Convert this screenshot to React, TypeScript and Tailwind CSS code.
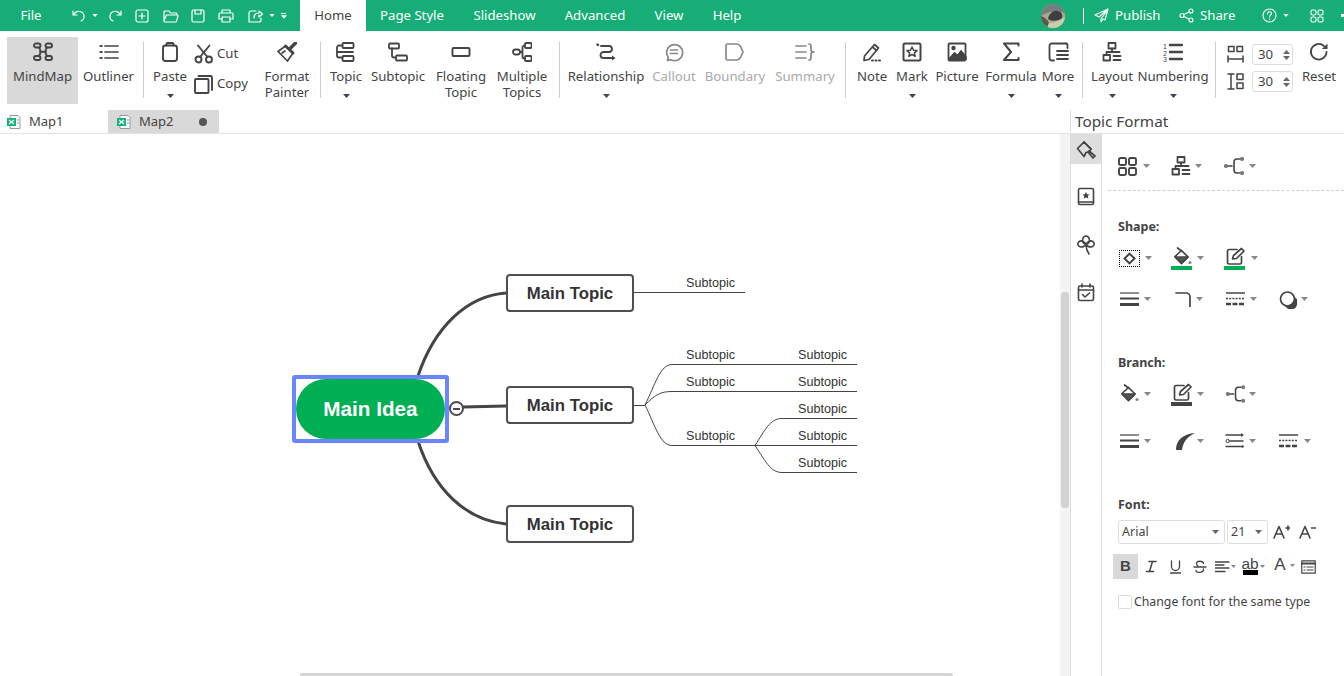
import React from "react";

type P = { children?: React.ReactNode; w?: number; h?: number; c?: string; sw?: number; vb?: string };
const I = ({ children, w = 20, h = 20, c = "#444", sw = 1.7, vb }: P) => (
  <svg width={w} height={h} viewBox={vb ?? `0 0 ${w} ${h}`} fill="none" stroke={c} strokeWidth={sw} strokeLinecap="round" strokeLinejoin="round" className="block shrink-0">
    {children}
  </svg>
);

const Caret = ({ c = "#445", w = 7, h = 4 }: { c?: string; w?: number; h?: number }) => (
  <svg width={w} height={h} viewBox="0 0 7 4" className="block shrink-0"><path d="M0 0h7L3.5 4z" fill={c} /></svg>
);

const MindMapI = () => (
  <I sw={1.9}><rect x="1" y="1.5" width="6.5" height="4" rx="2" /><rect x="12.5" y="1.5" width="6.5" height="4" rx="2" /><rect x="1" y="14" width="6.5" height="4" rx="2" /><rect x="12.5" y="14" width="6.5" height="4" rx="2" /><path d="M6 5.5C8 8 8 11 6 14M14 5.5C12 8 12 11 14 14M7 9.7h6" /></I>
);
const OutlinerI = () => (
  <I><path d="M6 4h13M6 10h13M6 16h13" /><path d="M1.5 4h1.2M1.5 10h1.2M1.5 16h1.2" strokeWidth="2.2" /></I>
);
const PasteI = () => (
  <I sw={1.9}><rect x="3" y="3.5" width="14" height="15.5" rx="2.5" /><path d="M6.5 3.5V2a1 1 0 0 1 1-1h5a1 1 0 0 1 1 1v1.5" /></I>
);
const CutI = () => (
  <I sw={1.9}><circle cx="4.5" cy="15.5" r="3" /><circle cx="15" cy="15.5" r="3" /><path d="M6 13L15.5 1.5M13.5 13L4 1.5" /></I>
);
const CopyI = () => (
  <I sw={1.9}><rect x="1" y="5" width="13.5" height="14" rx="1" /><path d="M4.5 2h12a1.5 1.5 0 0 1 1.5 1.5V16" /></I>
);
const BrushI = () => (
  <I><path d="M1 9.5L8.5 4l7.5 7-5.5 8z" fill="#fff" /><path d="M8.5 4l7.500 7" strokeWidth="3" /><path d="M13 6.500L18.500 1" strokeWidth="3.400" /><path d="M5 11l3-2" /></I>
);
const TopicI = () => (
  <I sw={1.800}><rect x="6.500" y="1" width="11" height="5" rx="1" /><rect x="6.500" y="14" width="11" height="5" rx="1" /><path d="M6.500 3.500H3a2 2 0 0 0-2 2v8a2 2 0 0 0 2 2h3.500M1 10h16" /></I>
);
const SubtopicI = () => (
  <I sw={1.800}><rect x="1" y="1.500" width="10" height="5" rx="1" /><rect x="8" y="13.500" width="11" height="5" rx="1" /><path d="M4 6.500v7a2 2 0 0 0 2 2h2" /></I>
);
const FloatI = () => (
  <I sw={1.900}><rect x="1.500" y="6" width="17" height="8" rx="1" /></I>
);
const MultiI = () => (
  <I sw={1.800}><rect x="1" y="7.500" width="7" height="5" rx="2.500" /><rect x="13" y="1" width="6.500" height="5" rx="1" /><rect x="13" y="14" width="6.500" height="5" rx="1" /><path d="M8 10h2.500V5.500a2 2 0 0 1 2-2h.5M10.500 10v4.500a2 2 0 0 0 2 2h.5" /></I>
);
const RelI = () => (
  <I sw={1.800}><path d="M5 4h8a3 3 0 0 1 0 6H7.500a3 3 0 0 0 0 6H15.500" /><path d="M1.500 2.500L2 3" strokeWidth="2.400" /><path d="M16 13.500l3.500 2.500-3.500 2.500z" fill="#444" stroke="none" /></I>
);
const CalloutI = () => (
  <I c="#888"><path d="M3.500 18.500l.7-3.200A8 8 0 1 1 7 17.700z" /><path d="M6.500 8h7M6.500 11.500h7" /></I>
);
const BoundaryI = () => (
  <I c="#888"><path d="M2.500 2h9c2 0 3 .8 4 2.500l2.500 5.500-2.500 5.500c-1 1.700-2 2.500-4 2.500h-9A1.500 1.500 0 0 1 1 16.500v-13A1.500 1.500 0 0 1 2.500 2z" /></I>
);
const SummaryI = () => (
  <I c="#888"><path d="M1 4h10M1 10h10M1 16h10" /><path d="M14 2c2 0 2 1 2 2.500V8c0 1 1 2 3 2-2 0-3 1-3 2v3.500c0 1.500 0 2.500-2 2.500" /></I>
);
const NoteI = () => (
  <I><path d="M2.500 14L12.500 2.500l4 3.500L7 17.500l-5 1z" /><path d="M10.500 5l4 3.500" /><path d="M10 18.500h1M13.500 18.500h1M17 18.500h1" strokeWidth="2" /></I>
);
const MarkI = () => (
  <I sw={2}><rect x="1.500" y="1.500" width="17" height="17" rx="1.500" /><path d="M10 5l1.500 3.200 3.500.4-2.600 2.300.8 3.400-3.200-1.800-3.200 1.800.8-3.400L5 8.600l3.500-.4z" strokeWidth="1.500" /></I>
);
const PictureI = () => (
  <I sw={1.800}><rect x="1.500" y="1.500" width="17" height="17" rx="1" /><path d="M2 17l5.500-6 3 3 3.500-5 5 6v2H2z" fill="#444" /><circle cx="6.500" cy="6" r="1.300" fill="#444" /></I>
);
const SigmaI = () => (
  <I sw={2} w={18}><path d="M16.500 3.500V1.500H2l7 8.500-7 8h14.500v-2" /></I>
);
const MoreI = () => (
  <I w={21} sw={1.800}><path d="M18 1.500H4a2.500 2.500 0 0 0-2.500 2.500v12A2.500 2.500 0 0 0 4 18.500h2" /><path d="M18 1.500a1.500 1.500 0 0 1 1.500 1.500v3" /><path d="M9 9h11M9 13h11M9 17h11" /></I>
);
const LayoutI = () => (
  <I sw={1.800}><rect x="6.500" y="1" width="7" height="5.500" /><rect x="1.500" y="13" width="6.500" height="5.500" /><path d="M10 6.500V10M4.500 13v-3h13M11.500 14h7M11.500 18h7" /></I>
);
const NumberingI = () => (
  <I sw={2.400}><path d="M7 3h12M7 10h12M7 17h12" /><text x="0" y="7" fontSize="7" fill="#444" stroke="none" fontFamily="Liberation Sans">1</text><text x="0" y="13.500" fontSize="7" fill="#444" stroke="none" fontFamily="Liberation Sans">2</text><text x="0" y="20" fontSize="7" fill="#444" stroke="none" fontFamily="Liberation Sans">3</text></I>
);
const ResetI = () => (
  <I sw={1.800}><path d="M17.500 10a7.800 7.800 0 1 1-2.500-6" /><path d="M18.500 1.500v5.500h-5.500z" fill="#444" stroke="none" /></I>
);

const Item = ({ w, icon, label, label2, caret, muted }: { w: string; icon: React.ReactNode; label: string; label2?: string; caret?: boolean; muted?: boolean }) => (
  <div className={`${w} h-[67px] flex flex-col items-center pt-[5px] shrink-0`}>
    <div className="h-[20px] flex items-center justify-center">{icon}</div>
    <div className={`mt-[6px] text-center leading-[16px] whitespace-nowrap ${muted ? "text-[#aaaaaa]" : "text-[#444444]"}`}>
      <div>{label}</div>
      {label2 && <div>{label2}</div>}
    </div>
    {caret && <div className="mt-[10px]"><Caret /></div>}
  </div>
);

const Div = ({ ml = "ml-[4px]", mr = "mr-[3px]" }: { ml?: string; mr?: string }) => (
  <div className={`w-px h-[56px] mt-[5px] bg-[#cccccc] shrink-0 ${ml} ${mr}`} />
);

const Spin = () => (
  <div className="w-[41px] h-[21px] border border-[#dddddd] rounded-[3px] flex items-center justify-between pl-[5px] pr-[2px] text-[#444444]">
    <span>30</span>
    <div className="flex flex-col gap-[2px]">
      <svg width="7" height="4" viewBox="0 0 7 4"><path d="M3.500 0L7 4H0z" fill="#666" /></svg>
      <Caret c="#666" />
    </div>
  </div>
);

const MapIcon = () => (
  <svg width="14" height="14" viewBox="0 0 14 14" className="block shrink-0">
    <path d="M3 .5h8l2 2v11H3z" fill="#fff" stroke="#999" />
    <rect x="0" y="3" width="9" height="8" fill="#11b27a" />
    <path d="M2 5l5 4M7 5L2 9" stroke="#fff" strokeWidth="1.300" />
    <path d="M10 5h2M10 8h2" stroke="#999" />
  </svg>
);

const TopLabel = ({ w, children }: { w: string; children: string }) => (
  <div className={`${w} text-center shrink-0 text-white`}>{children}</div>
);

const G = "#444";

const Cell = ({ w = "w-[53px]", icon, gap = "ml-[6px]" }: { w?: string; icon: React.ReactNode; gap?: string }) => (
  <div className={`${w} flex items-center shrink-0`}>
    {icon}
    <div className={gap}><Caret c="#888" w={7} h={4} /></div>
  </div>
);

const GridI = () => (
  <I w={19} h={19} sw={1.900}><rect x="1" y="1" width="7" height="7" rx="1.500" /><rect x="11" y="1" width="7" height="7" rx="1.500" /><rect x="1" y="11" width="7" height="7" rx="1.500" /><rect x="11" y="11" width="7" height="7" rx="1.500" /></I>
);
const BranchI = ({ w = 21 }: { w?: number }) => (
  <I w={w} h={18} vb="0 0 21 18" sw={1.600}><path d="M2 9h6M15.500 2H13a3 3 0 0 0-3 3v8a3 3 0 0 0 3 3h2.500" /><circle cx="2" cy="9" r="1.300" fill="#777" stroke="#777" /><circle cx="18" cy="2" r="1.300" fill="#777" stroke="#777" /><circle cx="18" cy="16" r="1.300" fill="#777" stroke="#777" /></I>
);
const BucketI = ({ bar }: { bar?: string }) => (
  <div className="flex flex-col items-center w-[21px]">
    <I w={20} h={20}><path d="M3 9.500L9.500 3.500l6.500 6.500-6.500 6.500z" /><path d="M3 10h13l-6.500 6.500z" fill="#555" /><path d="M5.500 1l4 3" /><circle cx="18" cy="15.500" r="1.600" fill="#888" stroke="none" /></I>
    {bar && <div className={`w-[21px] h-[4px] mt-[-1px] ${bar}`} />}
  </div>
);
const EditI = ({ bar }: { bar: string }) => (
  <div className="flex flex-col items-center w-[21px]">
    <I w={20} h={19}><path d="M16.500 9.500v6a1.500 1.500 0 0 1-1.500 1.500H4a1.500 1.500 0 0 1-1.500-1.500V4A1.500 1.500 0 0 1 4 2.500h8" /><path d="M7.500 12l1-3.500L16.500 1.500 19 4l-7.500 7.500z" /></I>
    <div className={`w-[21px] h-[4px] ${bar}`} />
  </div>
);
const LinesI = () => (
  <svg width="19" height="16" viewBox="0 0 19 16" fill="none" stroke={G} className="block shrink-0"><path d="M0 2h19" strokeWidth="1.200" /><path d="M0 7.500h19" strokeWidth="2" /><path d="M0 13.500h19" strokeWidth="3" /></svg>
);
const DashI = () => (
  <svg width="19" height="16" viewBox="0 0 19 16" fill="none" stroke={G} className="block shrink-0"><path d="M0 2h19" strokeWidth="1.500" /><path d="M0 7.500h19" strokeWidth="1.500" strokeDasharray="2 1.200" /><path d="M0 13h19" strokeWidth="2.500" strokeDasharray="5 1.500" /></svg>
);

export default function App() {
  return (
    <div className="w-[1344px] h-[676px] overflow-hidden flex flex-col bg-white text-[13.200px] font-['Noto_Sans','Open_Sans',sans-serif]">
      {/* Title bar */}
      <div className="h-[31px] bg-[#16ae76] flex items-center text-white shrink-0">
        <div className="w-[62px] text-center shrink-0">File</div>
        <div className="flex items-center w-[238px] shrink-0">
          <div className="ml-[10px]"><I w={14} h={14} c="#fff" sw={1.200}><path d="M1 2v4h4M1.500 6C3 3 6 2 8 2.500a5 5 0 0 1 1 9.500" /></I></div>
          <div className="ml-[6px]"><Caret c="#fff" w={6} h={3} /></div>
          <div className="ml-[10px]"><I w={14} h={14} c="#fff" sw={1.200}><path d="M13 2v4H9M12.500 6C11 3 8 2 6 2.500a5 5 0 0 0-1 9.500" /></I></div>
          <div className="ml-[13px]"><I w={14} h={14} c="#fff" sw={1.200}><rect x="1" y="1" width="12" height="12" rx="2" /><path d="M7 4v6M4 7h6" /></I></div>
          <div className="ml-[14px]"><I w={16} h={14} c="#fff" sw={1.200}><path d="M1 12V3a1 1 0 0 1 1-1h4l1.500 2H13a1 1 0 0 1 1 1v1M1 12a1 1 0 0 0 1 1h10.500a1 1 0 0 0 1-.8L15 7a1 1 0 0 0-1-1H4a1 1 0 0 0-1 .8z" /></I></div>
          <div className="ml-[12px]"><I w={14} h={14} c="#fff" sw={1.200}><rect x="1" y="1" width="12" height="12" rx="1.500" /><path d="M4 1v4h6V1" /></I></div>
          <div className="ml-[13px]"><I w={16} h={14} c="#fff" sw={1.200}><path d="M4 4V1h8v3M4 10H1V5a1 1 0 0 1 1-1h12a1 1 0 0 1 1 1v5h-3" /><rect x="4" y="8" width="8" height="5" /></I></div>
          <div className="ml-[14px]"><I w={15} h={14} c="#fff" sw={1.200}><path d="M8 2H3a2 2 0 0 0-2 2v9h10a2 2 0 0 0 2-2V9M6 9c0-3 2-5 5-5V2l3.500 3L11 8V6" /></I></div>
          <div className="ml-[6px]"><Caret c="#fff" w={6} h={3} /></div>
          <div className="ml-[6px] flex flex-col gap-[1px]"><div className="w-[5px] h-px bg-white" /><Caret c="#fff" w={6} h={4} /></div>
        </div>
        <div className="w-[66px] h-[31px] bg-white text-[#444444] flex items-center justify-center shrink-0">Home</div>
        <TopLabel w="w-[92px]">Page Style</TopLabel>
        <TopLabel w="w-[91px] ml-[1px]">Slideshow</TopLabel>
        <TopLabel w="w-[90px]">Advanced</TopLabel>
        <TopLabel w="w-[58px]">View</TopLabel>
        <TopLabel w="w-[58px]">Help</TopLabel>
        <div className="flex-1 flex items-center justify-end">
          <svg width="24" height="24" viewBox="0 0 24 24" className="block shrink-0">
            <clipPath id="av"><circle cx="12" cy="12" r="12" /></clipPath>
            <g clipPath="url(#av)"><rect width="24" height="24" fill="#a8a98e" /><path d="M0 0h24v9C16 6 7 7 0 12z" fill="#727e80" /><path d="M7 15c1-5 5-9 9-8 4 0 6 3 5 7-3 3-10 4-14 1z" fill="#3c3e41" /><path d="M0 12c3 1 6 3 8 7l-2 5H0z" fill="#565a52" /><path d="M8 19c5 0 10-2 16-6v11H6z" fill="#cdcdae" /></g>
          </svg>
          <div className="w-px h-[16px] bg-white ml-[18px] mr-[10px]" />
          <I w={15} h={15} c="#fff" sw={1.100}><path d="M14 1L1 7l4 2 9-8-7 10v3l2-3 2 1z" /></I>
          <span className="ml-[6px] w-[45px]">Publish</span>
          <div className="ml-[19px]"><I w={15} h={15} c="#fff" sw={1.100}><circle cx="3" cy="7.500" r="2" /><circle cx="12" cy="3" r="2" /><circle cx="12" cy="12" r="2" /><path d="M5 6.500l5-2.500M5 8.500l5 2.500" /></I></div>
          <span className="ml-[6px] w-[36px]">Share</span>
          <div className="ml-[26px]"><I w={15} h={15} c="#fff" sw={1.100}><circle cx="7.500" cy="7.500" r="6.500" /><path d="M5.500 6c0-3 4-3 4-.5 0 1.500-2 1.500-2 3.500M7.500 11v.5" /></I></div>
          <div className="ml-[6px]"><Caret c="#fff" w={6} h={3} /></div>
          <div className="ml-[21px]"><I w={14} h={14} c="#fff" sw={1.100}><rect x="1" y="1" width="5" height="5" rx="1.500" /><rect x="8" y="1" width="5" height="5" rx="1.500" /><rect x="1" y="8" width="5" height="5" rx="1.500" /><rect x="8" y="8" width="5" height="5" rx="1.500" /></I></div>
          <div className="ml-[17px] mr-[-1px] w-[4px] h-[3px] bg-white" />
        </div>
      </div>

      {/* Ribbon */}
      <div className="h-[79px] flex pt-[6px] pl-[7px] shrink-0">
        <div className="w-[71px] h-[67px] bg-[#d9d9d9] shrink-0"><Item w="w-[71px]" icon={<MindMapI />} label="MindMap" /></div>
        <Item w="w-[61px]" icon={<OutlinerI />} label="Outliner" />
        <Div ml="ml-[4px]" mr="mr-[2px]" />
        <Item w="w-[48px]" icon={<PasteI />} label="Paste" caret />
        <div className="w-[68px] h-[67px] shrink-0 flex flex-col pt-[7px] text-[#444444]">
          <div className="flex items-center h-[20px]"><CutI /><span className="ml-[3px]">Cut</span></div>
          <div className="flex items-center h-[20px] mt-[10px]"><CopyI /><span className="ml-[3px]">Copy</span></div>
        </div>
        <Item w="w-[50px]" icon={<BrushI />} label="Format" label2="Painter" />
        <Div ml="ml-[8px]" mr="mr-[6px]" />
        <Item w="w-[38px]" icon={<TopicI />} label="Topic" caret />
        <Item w="w-[66px]" icon={<SubtopicI />} label="Subtopic" />
        <Item w="w-[60px]" icon={<FloatI />} label="Floating" label2="Topic" />
        <Item w="w-[62px]" icon={<MultiI />} label="Multiple" label2="Topics" />
        <Div ml="ml-[6px]" mr="mr-[3px]" />
        <Item w="w-[86px]" icon={<RelI />} label="Relationship" caret />
        <Item w="w-[50px]" icon={<CalloutI />} label="Callout" muted />
        <Item w="w-[72px]" icon={<BoundaryI />} label="Boundary" muted />
        <Item w="w-[68px]" icon={<SummaryI />} label="Summary" muted />
        <Div ml="ml-[6px]" mr="mr-[6px]" />
        <Item w="w-[40px]" icon={<NoteI />} label="Note" />
        <Item w="w-[40px]" icon={<MarkI />} label="Mark" caret />
        <Item w="w-[50px]" icon={<PictureI />} label="Picture" />
        <Item w="w-[58px]" icon={<SigmaI />} label="Formula" caret />
        <Item w="w-[36px]" icon={<MoreI />} label="More" caret />
        <Div ml="ml-[6px]" mr="mr-[3px]" />
        <Item w="w-[52px]" icon={<LayoutI />} label="Layout" caret />
        <Item w="w-[70px]" icon={<NumberingI />} label="Numbering" caret />
        <Div ml="ml-[7px]" mr="mr-[11px]" />
        <div className="w-[68px] shrink-0 flex flex-col pt-[7px] gap-[6px]">
          <div className="flex items-center gap-[8px] h-[21px]">
            <I w={17} h={19} sw={1.500}><rect x="1.500" y="1.500" width="5.500" height="5" /><rect x="10" y="1.500" width="5.500" height="5" /><path d="M1 11v6M16 11v6M1 14h15" /></I>
            <Spin />
          </div>
          <div className="flex items-center gap-[8px] h-[21px]">
            <I w={17} h={19} sw={1.500}><path d="M1 2h6M1 17h6M4 2v15" /><rect x="10" y="2" width="6" height="5.500" /><rect x="10" y="11" width="6" height="5.500" /></I>
            <Spin />
          </div>
        </div>
        <div className="ml-[5px]"><Item w="w-[38px]" icon={<ResetI />} label="Reset" /></div>
      </div>

      {/* Tab row */}
      <div className="h-[24px] flex border-b border-[#e3e3e3] shrink-0 text-[#444444] text-[13px]">
        <div className="w-[108px] flex items-center pl-[7px] shrink-0"><MapIcon /><span className="ml-[8px]">Map1</span></div>
        <div className="w-[111px] bg-[#d9d9d9] flex items-center pl-[9px] shrink-0"><MapIcon /><span className="ml-[8px]">Map2</span><span className="ml-[25px] w-[8px] h-[8px] rounded-full bg-[#555555] shrink-0" /></div>
        <div className="flex-1" />
        <div className="w-[274px] border-l border-[#dddddd] pl-[4px] flex items-center text-[15.300px] shrink-0">Topic Format</div>
      </div>

      {/* Main */}
      <div className="flex-1 flex min-h-0">
        <div className="w-[1060px] relative shrink-0 overflow-hidden">
          <svg width="1060" height="542" viewBox="0 134 1060 542" fill="none" className="absolute left-0 top-0">
            <path d="M418 376C434 328 466 296 506 293" stroke="#444" strokeWidth="3" />
            <path d="M418 441C434 490 466 520 506 524" stroke="#444" strokeWidth="3" />
            <path d="M463 407L506 406" stroke="#444" strokeWidth="3" />
            <g stroke="#444" strokeWidth="1">
              <path d="M634 292.500H745" />
              <path d="M634 405.500H645" />
              <path d="M645 405C655 385 660 364.500 672 364.500H857" />
              <path d="M645 405C655 395 660 391.500 672 391.500H857" />
              <path d="M645 405C655 425 660 445.500 672 445.500H755" />
              <path d="M755 445.500C765 430 770 418.500 782 418.500H857" />
              <path d="M755 445.500H857" />
              <path d="M755 445.500C765 460 770 472.500 782 472.500H857" />
            </g>
          </svg>
          <div className="absolute left-[292px] top-[241px] w-[157px] h-[68px] border-[4px] border-[#6a86ff] rounded-[3px]" />
          <div className="absolute left-[296px] top-[245px] w-[149px] h-[60px] rounded-[30px] bg-[#00ae53] text-white font-bold text-[20.700px] pb-[1px] flex items-center justify-center font-['Liberation_Sans',sans-serif]">Main Idea</div>
          <div className="absolute left-[449px] top-[267px] w-[15px] h-[15px] rounded-full border-2 border-[#4a4a4a] bg-white flex items-center justify-center"><div className="w-[7px] h-[2px] bg-[#4a4a4a]" /></div>
          {[140, 252, 371].map((t, i) => (
            <div key={i} style={{ top: t }} className="absolute left-[506px] w-[128px] h-[38px] rounded-[4px] border-2 border-[#505050] bg-white pt-[1px] flex items-center justify-center font-bold text-[16.800px] text-[#333333] font-['Liberation_Sans',sans-serif]">Main Topic</div>
          ))}
          {[[686, 149], [686, 221], [686, 248], [686, 302], [798, 221], [798, 248], [798, 275], [798, 302], [798, 329]].map(([x, y], i) => (
            <div key={i} style={{ left: x, top: y - 8 }} className="absolute leading-[16px] text-[12.600px] text-[#333333] font-['Liberation_Sans',sans-serif]">Subtopic</div>
          ))}
          <div className="absolute left-[300px] w-[653px] bottom-0 h-[3px] rounded-t-[2px] bg-[#d5d5d5]" />
        </div>

        {/* scrollbar */}
        <div className="w-[10px] bg-[#f3f3f3] shrink-0 pt-[158px] pl-px">
          <div className="w-[8px] h-[216px] bg-[#d2d2d2] rounded-b-[4px] rounded-t-[4px]" />
        </div>

        {/* side icons */}
        <div className="w-[32px] border-l border-r border-[#dddddd] shrink-0 flex flex-col items-center">
          <div className="w-[30px] h-[30px] bg-[#dedede] flex items-center justify-center">
            <I w={20} h={20}><path d="M1.500 9.500L8 3l7 7-2 3-3 .5-2 4z" /><path d="M8 3l7 7" /><path d="M13 12l6 5-2 2-5-6" /></I>
          </div>
          <div className="mt-[23px]"><I w={18} h={20} sw={1.600}><rect x="1.500" y="1.500" width="15" height="16" rx="1.500" /><path d="M1.500 15h15" /><path d="M9 5l1.200 2.200 2.300.3-1.700 1.600.5 2.400L9 10.400l-2.300 1.100.5-2.400-1.700-1.600 2.300-.3z" fill="#444" stroke="none" /></I></div>
          <div className="mt-[28px]"><I w={20} h={20} sw={1.600}><path d="M10 9C6 9 5 2 10 1c5 1 4 8 0 8zM10 9c-3 5-9 3-8-1 1-3 5-3 8 1zM10 9c3 5 9 3 8-1-1-3-5-3-8 1zM10 10c0 4 1 6 3 9" /></I></div>
          <div className="mt-[28px]"><I w={18} h={19} sw={1.600}><rect x="1.500" y="3" width="15" height="14.500" rx="1.500" /><path d="M1.500 7h15M5 1v3M13 1v3M5.500 11.500l2.500 2.500 4.500-4" /></I></div>
        </div>

        {/* Panel */}
        <div className="flex-1 text-[#444444] min-w-0">
          <div className="pl-[16px] pt-[20px] flex h-[44px] items-center">
            <Cell icon={<GridI />} gap="ml-[6px]" />
            <Cell icon={<LayoutI />} gap="ml-[4px]" />
            <Cell icon={<BranchI />} gap="ml-[4px]" />
          </div>
          <div className="mt-[12px] ml-[6px] border-t border-dashed border-[#cfcfcf]" />
          <div className="pl-[16px] mt-[27px] h-[18px] leading-[18px] font-bold text-[12.500px]">Shape:</div>
          <div className="pl-[16px] mt-[7px] h-[30px] flex items-center">
            <Cell icon={<div className="w-[21px] h-[17px] border border-dotted border-black flex items-center justify-center ml-px"><div className="w-[9px] h-[9px] rotate-45 border-2 border-[#444444]" /></div>} gap="ml-[5px]" />
            <Cell icon={<BucketI bar="bg-[#00ae53]" />} gap="ml-[5px]" />
            <Cell icon={<EditI bar="bg-[#00ae53]" />} gap="ml-[6px]" />
          </div>
          <div className="pl-[16px] mt-[11px] h-[30px] flex items-center">
            <Cell icon={<div className="ml-[2px]"><LinesI /></div>} gap="ml-[5px]" />
            <Cell icon={<div className="ml-[4px]"><I w={16} h={16} sw={1.700}><path d="M1 2h10a4 4 0 0 1 4 4v10" /></I></div>} gap="ml-[5px]" />
            <Cell w="w-[55px]" icon={<div className="ml-[2px]"><DashI /></div>} gap="ml-[5px]" />
            <Cell icon={<I w={19} h={19}><circle cx="8.500" cy="9" r="7" fill="#fff" stroke="#444" /><path d="M6 15a7 7 0 0 0 9-8 4 4 0 0 1 3 5 6 6 0 0 1-12 3z" fill="#444" stroke="none" /></I>} gap="ml-[3px]" />
          </div>
          <div className="pl-[16px] mt-[40px] h-[18px] leading-[18px] font-bold text-[12.500px]">Branch:</div>
          <div className="pl-[16px] mt-[7px] h-[30px] flex items-center">
            <Cell icon={<BucketI />} gap="ml-[5px]" />
            <Cell icon={<EditI bar="bg-[#444444]" />} gap="ml-[5px]" />
            <Cell icon={<div className="ml-[2px]"><BranchI w={20} /></div>} gap="ml-[3px]" />
          </div>
          <div className="pl-[16px] mt-[17px] h-[30px] flex items-center">
            <Cell icon={<div className="ml-[2px]"><LinesI /></div>} gap="ml-[5px]" />
            <Cell icon={<div className="ml-[4px]"><I w={20} h={18} sw={1}><path d="M1 18C1 8 8 2 20 1 12 5 8 10 7 18z" fill="#444" stroke="none" /></I></div>} gap="ml-[2px]" />
            <Cell w="w-[55px]" icon={<div className="ml-[1px]"><I w={19} h={16}><path d="M1 2h15M1 13.500h15M5.500 8H18" strokeWidth="1.500" /><circle cx="2.700" cy="8" r="1.700" strokeWidth="1" /><circle cx="17.500" cy="13.500" r="1.300" fill="#444" stroke="none" /><path d="M16 0l3 2-3 2z" fill="#444" stroke="none" /></I></div>} gap="ml-[5px]" />
            <Cell icon={<DashI />} gap="ml-[6px]" />
          </div>
          <div className="pl-[16px] mt-[40px] h-[18px] leading-[18px] font-bold text-[12.500px]">Font:</div>
          <div className="pl-[16px] mt-[6px] h-[24px] flex items-center text-[12.500px]">
            <div className="w-[107px] h-[24px] border border-[#dddddd] rounded-[3px] flex items-center justify-between pl-[3px] pr-[5px]"><span className="pt-[1px]">Arial</span><Caret c="#666" /></div>
            <div className="ml-[2px] w-[41px] h-[24px] border border-[#dddddd] rounded-[3px] flex items-center justify-between pl-[3px] pr-[5px]"><span className="pt-[1px]">21</span><Caret c="#666" /></div>
            <div className="ml-[5px] w-[16px] h-[16px]"><I w={17} h={16} sw={1.600}><path d="M1 14L6 2.500 11 14M3 10h6" /><path d="M13 4h4M15 2v4" /></I></div>
            <div className="ml-[10px] w-[16px] h-[16px]"><I w={17} h={16} sw={1.600}><path d="M1 14L6 2.500 11 14M3 10h6" /><path d="M12.500 4h4" /></I></div>
          </div>
          <div className="pl-[11px] mt-[10px] h-[25px] flex items-center">
            <div className="w-[25px] h-[25px] bg-[#d9d9d9] flex items-center justify-center font-bold text-[15px] font-['Liberation_Sans',sans-serif]">B</div>
            <div className="w-[25px] flex justify-center"><I w={12} h={13} sw={1.500}><path d="M4 1.500h7M1.500 11.500h7M7.500 1.500L4.500 11.500" /></I></div>
            <div className="w-[25px] flex justify-center"><I w={13} h={14} sw={1.300}><path d="M2.500 1v5.500a4 4 0 0 0 8 0V1M1.500 13h10" /></I></div>
            <div className="w-[23px] flex justify-center"><I w={14} h={14} sw={1.300}><path d="M10.500 3.500C10 .500 3.500.500 3.500 3.500c0 1 .5 1.800 1.500 2.500M1 7h12M10.500 9c.5 4-7 4.500-7.500 1.500" /></I></div>
            <div className="w-[27px] flex items-center justify-center gap-[1px] pl-[2px]"><I w={15} h={12} sw={1.300}><path d="M0 1h14M0 4h9M0 7h14M0 10.500h10" /></I><Caret c="#888" w={5} h={3} /></div>
            <div className="w-[28px] flex items-center justify-center gap-[1px] pl-[2px]">
              <div className="flex flex-col items-center leading-[12px] text-[15.500px] font-['Liberation_Sans',sans-serif]"><span>ab</span><div className="w-[15px] h-[5px] bg-black" /></div>
              <Caret c="#888" w={5} h={3} />
            </div>
            <div className="w-[34px] flex items-center justify-center gap-[4px] pl-[3px] pb-[3px] text-[17px] font-['Liberation_Sans',sans-serif]"><span>A</span><Caret c="#888" w={5} h={3} /></div>
            <div className="ml-[1px]"><I w={15} h={14} sw={1.200}><rect x=".800" y=".800" width="13.400" height="12.400" /><path d="M1 3.500h13" strokeWidth="2" /><path d="M3 7h1M6 7h6M3 10h1M6 10h6" /></I></div>
          </div>
          <div className="pl-[16px] mt-[16px] h-[14px] flex items-center text-[12.300px]">
            <div className="w-[14px] h-[14px] border border-[#dddddd] rounded-[2px] shrink-0" />
            <span className="ml-[2px] whitespace-nowrap">Change font for the same type</span>
          </div>
        </div>
      </div>
    </div>
  );
}
